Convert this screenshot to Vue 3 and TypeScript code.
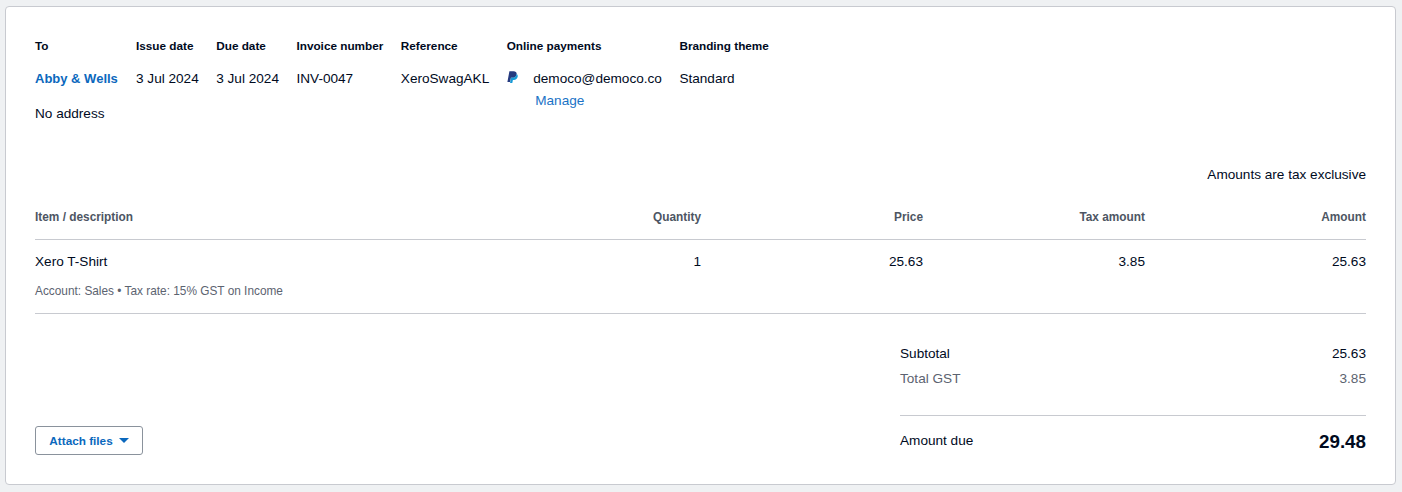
<script setup lang="ts">
interface Meta { label: string; value: string }
const metas: Meta[] = [
  { label: 'Issue date', value: '3 Jul 2024' },
  { label: 'Due date', value: '3 Jul 2024' },
  { label: 'Invoice number', value: 'INV-0047' },
  { label: 'Reference', value: 'XeroSwagAKL' },
]
</script>

<template>
  <main class="page">
    <section class="card">
      <div class="meta">
        <div class="col first">
          <div class="label">To</div>
          <a class="value contact">Abby &amp; Wells</a>
          <div class="address">No address</div>
        </div>
        <div v-for="m in metas" :key="m.label" class="col">
          <div class="label">{{ m.label }}</div>
          <div class="value">{{ m.value }}</div>
        </div>
        <div class="col">
          <div class="label">Online payments</div>
          <div class="value pay">
            <svg class="paypal" width="11" height="13" viewBox="0 0 11 13" aria-hidden="true">
              <path fill="#253b80" d="M2.4 0.3h4.2c2.2 0 3.4 1.2 3 3.1-.4 2.2-2 3.4-4.1 3.4H3.9L3.2 10.9H0.4z" />
              <path fill="#179bd7" d="M9.7 3.1c.9.6 1.2 1.6 1 2.7-.4 2-1.9 3.1-3.8 3.1h-1l-.6 3.2H3l.3-1.4 .7-3.9h1.6c2.2 0 3.7-1.3 4.1-3.7z" />
            </svg>
            <span>democo@democo.co</span>
          </div>
          <a class="manage">Manage</a>
        </div>
        <div class="col">
          <div class="label">Branding theme</div>
          <div class="value">Standard</div>
        </div>
      </div>

      <div class="tax-note">Amounts are tax exclusive</div>

      <div class="grid head">
        <div>Item / description</div>
        <div class="num">Quantity</div>
        <div class="num">Price</div>
        <div class="num">Tax amount</div>
        <div class="num">Amount</div>
      </div>
      <div class="line-item">
        <div class="grid row">
          <div>Xero T-Shirt</div>
          <div class="num">1</div>
          <div class="num">25.63</div>
          <div class="num">3.85</div>
          <div class="num">25.63</div>
        </div>
        <div class="account">Account: Sales • Tax rate: 15% GST on Income</div>
      </div>

      <div class="footer">
        <button class="attach" type="button">
          Attach files
          <svg width="10" height="5" viewBox="0 0 10 5" aria-hidden="true"><path fill="#0b68bd" d="M0 0h10L5 5z" /></svg>
        </button>
        <div class="totals">
          <div class="t-row"><span>Subtotal</span><span>25.63</span></div>
          <div class="t-row muted"><span>Total GST</span><span>3.85</span></div>
          <div class="t-row due"><span>Amount due</span><strong>29.48</strong></div>
        </div>
      </div>
    </section>
  </main>
</template>

<style scoped>
.page {
  box-sizing: border-box;
  width: 1402px;
  height: 492px;
  padding: 6px 6px 6px 5px;
  background: #eff1f3;
  font-family: "Liberation Sans", Arial, sans-serif;
  font-size: 13.6px;
  color: #000a1e;
}
.card {
  box-sizing: border-box;
  height: 479px;
  padding: 32px 29px 0;
  background: #fff;
  border: 1px solid #c8cad0;
  border-radius: 4px;
}
.meta { display: flex; gap: 17.5px; height: 114px; }
.col { display: flex; flex-direction: column; }
.first { min-width: 83.5px; }
.label { height: 14px; line-height: 14px; font-size: 11.75px; font-weight: 700; }
.value { margin-top: 18px; height: 16px; line-height: 16px; white-space: nowrap; }
.contact { font-size: 13px; font-weight: 700; color: #0b68bd; }
.address { margin-top: 19px; line-height: 16px; }
.pay { display: flex; align-items: flex-start; gap: 15.5px; }
.manage { margin-top: 6px; margin-left: 28.5px; line-height: 16px; color: #1a73c6; }
.tax-note { margin-top: 14px; line-height: 16px; text-align: right; }
.grid { display: grid; grid-template-columns: 1fr 222px 222px 222px 221px; }
.num { text-align: right; }
.head {
  margin-top: 27px;
  height: 29px;
  line-height: 14px;
  font-size: 11.85px;
  font-weight: 700;
  color: #4d5563;
  border-bottom: 1px solid #c8cad0;
}
.line-item { height: 73px; border-bottom: 1px solid #c8cad0; }
.row { padding-top: 14px; line-height: 16px; }
.account { margin-top: 14px; line-height: 14px; font-size: 11.85px; color: #5c6370; }
.footer { display: flex; justify-content: space-between; align-items: flex-end; }
.attach {
  display: flex;
  align-items: center;
  justify-content: center;
  gap: 6px;
  width: 108px;
  height: 29px;
  margin-bottom: 11px;
  padding: 0;
  background: #fff;
  border: 1px solid #8a929c;
  border-radius: 3px;
  font: 700 11.75px "Liberation Sans", Arial, sans-serif;
  color: #0b68bd;
}
.totals { width: 466px; padding-top: 32px; }
.t-row { display: flex; justify-content: space-between; height: 16px; line-height: 16px; }
.muted { margin-top: 9px; color: #5c6370; }
.due {
  align-items: center;
  margin-top: 28px;
  height: 50px;
  border-top: 1px solid #c8cad0;
}
.due strong { font-size: 18.8px; position: relative; top: 1px; }
</style>
